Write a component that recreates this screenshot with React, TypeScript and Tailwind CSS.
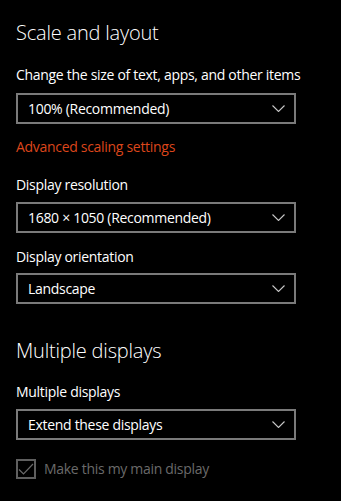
import React from 'react';

function Chevron() {
  return (
    <svg width="13" height="7" viewBox="0 0 13 7" fill="none" className="shrink-0">
      <path d="M0.5 0.5 L6.5 6.5 L12.5 0.5" stroke="#c8c8c8" strokeWidth="1.1" />
    </svg>
  );
}

function Dropdown({ value }: { value: string }) {
  return (
    <div className="w-[280px] h-[31px] border-2 border-[#7a7a7a] flex items-center justify-between pl-[10px] pr-[9px] text-white">
      <span>{value}</span>
      <Chevron />
    </div>
  );
}

export default function App() {
  return (
    <div
      className="w-[341px] h-[501px] bg-black text-white text-[14px] leading-[20px] tracking-[-0.3px] px-4 overflow-hidden"
      style={{ fontFamily: '"Open Sans", "Noto Sans", sans-serif' }}
    >
      {/* Scale and layout */}
      <h2 className="pt-[19px] text-[20px] leading-[28px] font-light tracking-[-0.2px]">Scale and layout</h2>
      <div className="mt-[18px]">Change the size of text, apps, and other items</div>
      <div className="mt-[8px]">
        <Dropdown value="100% (Recommended)" />
      </div>
      <div className="mt-[13px] text-[#dc461b]">Advanced scaling settings</div>

      <div className="mt-[18px]">Display resolution</div>
      <div className="mt-[7px]">
        <Dropdown value="1680 × 1050 (Recommended)" />
      </div>

      <div className="mt-[14px]">Display orientation</div>
      <div className="mt-[6px]">
        <Dropdown value="Landscape" />
      </div>

      {/* Multiple displays */}
      <h2 className="mt-[33px] text-[20px] leading-[28px] font-light tracking-[-0.2px]">Multiple displays</h2>
      <div className="mt-[17px]">Multiple displays</div>
      <div className="mt-[7px]">
        <Dropdown value="Extend these displays" />
      </div>

      <div className="mt-[19px] flex items-center gap-[8px] text-[#6a6a6a]">
        <div className="w-[20px] h-[20px] border-2 border-[#5f5f5f] flex items-center justify-center">
          <svg width="16" height="13" viewBox="0 0 16 13" fill="none">
            <path d="M1 6.5 L5.5 11 L15 1" stroke="#6a6a6a" strokeWidth="1.2" />
          </svg>
        </div>
        <span>Make this my main display</span>
      </div>
    </div>
  );
}
